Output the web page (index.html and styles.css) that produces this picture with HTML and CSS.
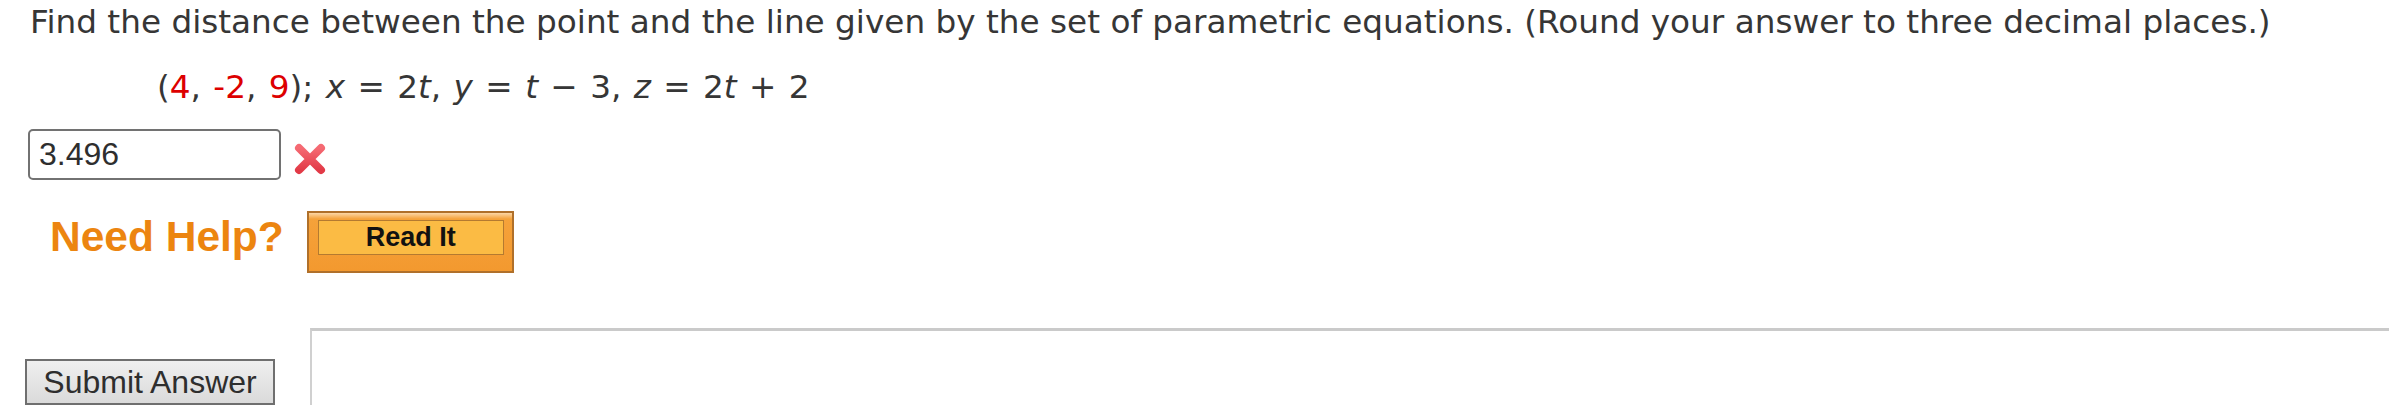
FILE: index.html
```html
<!DOCTYPE html>
<html>
<head>
<meta charset="utf-8">
<link rel="stylesheet" href="styles.css">
</head>
<body>
<div class="question">
  <p class="prompt">Find the distance between the point and the line given by the set of parametric equations. (Round your answer to three decimal places.)</p>
  <p class="equation">(<span class="red">4</span>, <span class="red">-2</span>, <span class="red">9</span>); <i>x</i> = 2<i>t</i>, <i>y</i> = <i>t</i> − 3, <i>z</i> = 2<i>t</i> + 2</p>
  <div class="answer-row">
    <div class="answer-box">3.496</div>
    <svg class="wrong" width="34" height="32" viewBox="0 0 34 32">
      <defs>
        <linearGradient id="xg" x1="0" y1="0" x2="0" y2="1">
          <stop offset="0" stop-color="#f56a73"/>
          <stop offset="1" stop-color="#e23a47"/>
        </linearGradient>
      </defs>
      <path d="M6 5 L28 27 M28 5 L6 27" stroke="url(#xg)" stroke-width="8" stroke-linecap="round"/>
    </svg>
  </div>
  <div class="help-row">
    <span class="need-help">Need Help?</span>
    <div class="read-it"><div class="read-it-inner">Read It</div></div>
  </div>
  <div class="submit-row">
    <div class="submit">Submit Answer</div>
    <div class="panel"></div>
  </div>
</div>
</body>
</html>
```
FILE: styles.css
```css
html, body {
  margin: 0;
  padding: 0;
  background: #ffffff;
}
body {
  width: 2389px;
  height: 407px;
  overflow: hidden;
}
.question {
  font-family: "DejaVu Sans", Verdana, sans-serif;
  color: #363636;
  font-size: 32.7px;
}
.prompt {
  margin: 0;
  padding: 2px 0 0 30px;
  line-height: 40px;
  white-space: nowrap;
}
.equation {
  margin: 25px 0 0 157px;
  line-height: 40px;
  white-space: nowrap;
  word-spacing: 2px;
}
.equation i {
  font-style: italic;
}
.red {
  color: #dd0000;
}
.answer-row {
  display: flex;
  align-items: flex-start;
  margin: 22px 0 0 28px;
}
.answer-box {
  box-sizing: border-box;
  width: 253px;
  height: 51px;
  border: 2px solid #727272;
  border-radius: 5px;
  padding: 0 0 0 9px;
  font-family: "Liberation Sans", Arial, sans-serif;
  font-size: 32px;
  line-height: 47px;
  color: #2e2e2e;
}
.wrong {
  margin: 14px 0 0 12px;
}
.help-row {
  display: flex;
  align-items: flex-start;
  margin: 31px 0 0 50px;
}
.need-help {
  margin-top: 2px;
  font-family: "Liberation Sans", Arial, sans-serif;
  font-weight: bold;
  font-size: 42.5px;
  color: #ec8510;
  white-space: nowrap;
}
.read-it {
  box-sizing: border-box;
  width: 207px;
  height: 62px;
  margin-left: 23px;
  border: 2px solid #b0702a;
  background: linear-gradient(#fcd7a6 0px, #f5a23a 6px, #f3992f 100%);
  padding: 7px 8px 0 9px;
}
.read-it-inner {
  box-sizing: border-box;
  height: 35px;
  border: 1px solid #b47a30;
  background: #fbbb44;
  font-family: "Liberation Sans", Arial, sans-serif;
  font-weight: bold;
  font-size: 27px;
  line-height: 33px;
  text-align: center;
  color: #111;
}
.submit-row {
  display: flex;
  align-items: flex-start;
  margin: 55px 0 0 25px;
}
.submit {
  box-sizing: border-box;
  width: 250px;
  height: 46px;
  margin-top: 31px;
  border: 2px solid #6f6f6f;
  background: linear-gradient(#efefef, #dadada);
  font-family: "Liberation Sans", Arial, sans-serif;
  font-size: 32px;
  line-height: 42px;
  text-align: center;
  color: #2e2e2e;
}
.panel {
  flex: 1;
  height: 74px;
  margin-left: 35px;
  border-top: 3px solid #cacaca;
  border-left: 2px solid #d0d0d0;
}
```
